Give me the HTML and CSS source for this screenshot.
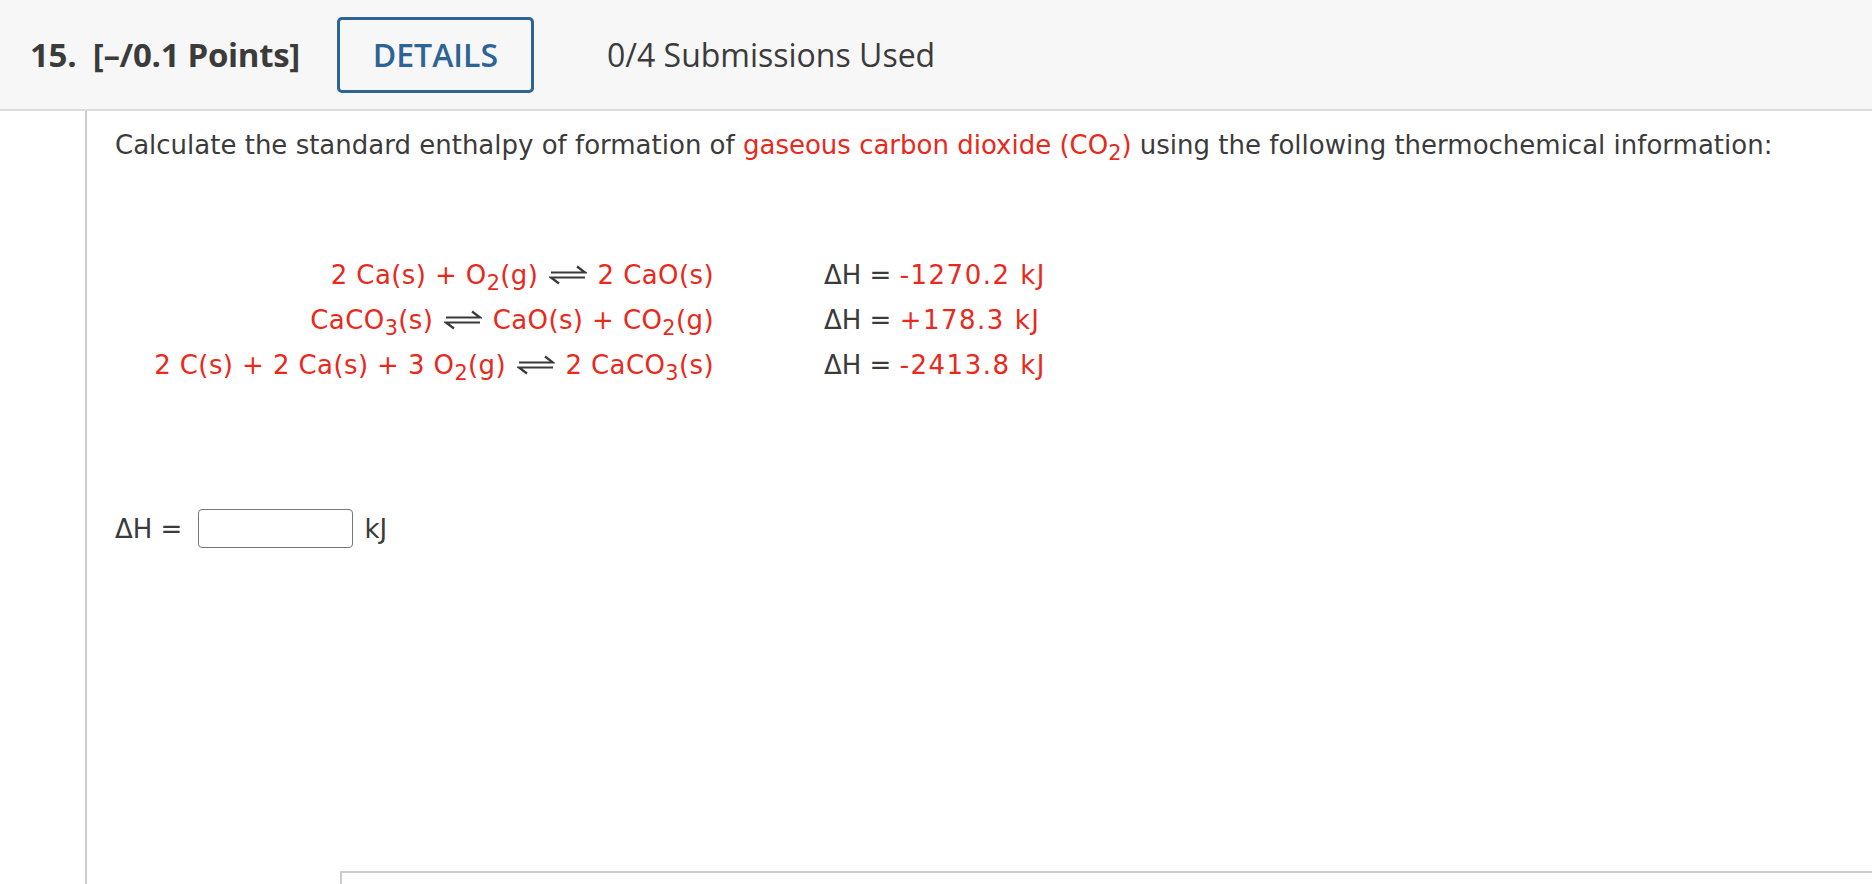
FILE: index.html
```html
<!DOCTYPE html>
<html>
<head>
<meta charset="utf-8">
<link rel="stylesheet" href="styles.css">
</head>
<body>
<div class="header">
  <div class="qnum">15.&nbsp; [–/0.1 Points]</div>
  <div class="details">DETAILS</div>
  <div class="subs">0/4 Submissions Used</div>
</div>
<div class="content">
  <p class="prompt">Calculate the standard enthalpy of formation of <span class="red">gaseous carbon dioxide (CO<sub>2</sub>)</span> using the following thermochemical information:</p>
  <div class="eqs">
    <div class="eq red">2 Ca(s) + O<sub>2</sub>(g) <svg class="arr" viewBox="0 0 38 20" width="38" height="20"><path d="M2 7.5 H36 L28 1.5 M36 12.5 H2 L10 18.5" fill="none" stroke="#3a3a3a" stroke-width="2.2" stroke-linejoin="miter"/></svg> 2 CaO(s)</div>
    <div class="dh">ΔH = <span class="red val">-1270.2 kJ</span></div>
    <div class="eq red">CaCO<sub>3</sub>(s) <svg class="arr" viewBox="0 0 38 20" width="38" height="20"><path d="M2 7.5 H36 L28 1.5 M36 12.5 H2 L10 18.5" fill="none" stroke="#3a3a3a" stroke-width="2.2" stroke-linejoin="miter"/></svg> CaO(s) + CO<sub>2</sub>(g)</div>
    <div class="dh">ΔH = <span class="red val">+178.3 kJ</span></div>
    <div class="eq red">2 C(s) + 2 Ca(s) + 3 O<sub>2</sub>(g) <svg class="arr" viewBox="0 0 38 20" width="38" height="20"><path d="M2 7.5 H36 L28 1.5 M36 12.5 H2 L10 18.5" fill="none" stroke="#3a3a3a" stroke-width="2.2" stroke-linejoin="miter"/></svg> 2 CaCO<sub>3</sub>(s)</div>
    <div class="dh">ΔH = <span class="red val">-2413.8 kJ</span></div>
  </div>
  <div class="answer">
    <span class="lbl">ΔH =</span>
    <span class="box"></span>
    <span class="unit">kJ</span>
  </div>
  <div class="next"></div>
</div>
</body>
</html>
```
FILE: styles.css
```css
html, body {
  margin: 0;
  padding: 0;
  background: #ffffff;
  height: 884px;
  overflow: hidden;
}
.header {
  height: 109px;
  background: #f7f7f7;
  border-bottom: 2px solid #dcdcdc;
  display: flex;
  align-items: center;
  padding-left: 30px;
  font-family: "Open Sans", sans-serif;
  color: #3b3b3b;
}
.qnum {
  font-weight: 700;
  font-size: 33px;
  letter-spacing: -0.3px;
}
.details {
  margin-left: 37px;
  width: 191px;
  height: 70px;
  border: 3px solid #2c6496;
  border-radius: 5px;
  display: flex;
  align-items: center;
  justify-content: center;
  color: #2c6496;
  font-weight: 600;
  font-size: 32px;
}
.subs {
  margin-left: 73px;
  font-size: 32px;
  color: #3b3b3b;
}
.content {
  margin-left: 85px;
  border-left: 2px solid #cccccc;
  height: 773px;
  padding-left: 28px;
  font-family: "DejaVu Sans", Verdana, sans-serif;
  font-size: 26px;
  color: #3b3b3b;
  position: relative;
}
.red { color: #e8291c; }
sub {
  font-size: 0.8em;
  vertical-align: -0.3em;
  line-height: 0;
}
.prompt {
  margin: 0;
  padding-top: 18px;
  line-height: 32px;
}
.eqs {
  margin-top: 98px;
  display: grid;
  grid-template-columns: 599px auto;
  column-gap: 110px;
  row-gap: 13px;
  line-height: 32px;
}
.eq {
  text-align: right;
  letter-spacing: 0.4px;
}
.val { letter-spacing: 1.5px; }
.arr {
  vertical-align: -1px;
  margin: 0 2px;
}
.answer {
  margin-top: 128px;
  display: flex;
  align-items: center;
}
.lbl { margin-right: 16px; }
.box {
  width: 153px;
  height: 37px;
  border: 1px solid #777;
  border-radius: 4px;
  background: #fff;
}
.unit { margin-left: 11px; }
.next {
  position: absolute;
  left: 253px;
  top: 760px;
  right: 0;
  height: 20px;
  border-top: 2px solid #cccccc;
  border-left: 2px solid #cccccc;
}
```
